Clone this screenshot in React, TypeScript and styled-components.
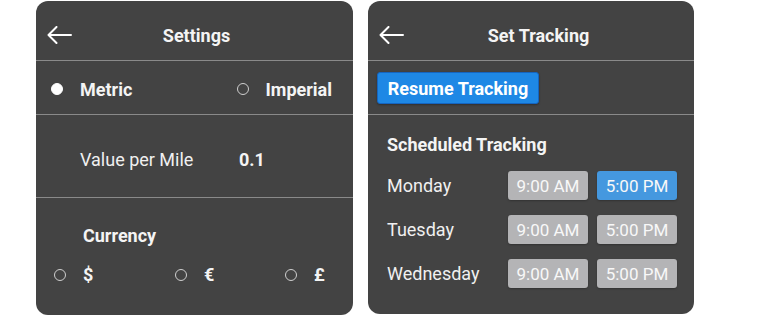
import React from 'react'
import styled, { createGlobalStyle } from 'styled-components'

const GlobalStyle = createGlobalStyle`
  body {
    margin: 0;
    background: #ffffff;
    font-family: Roboto, 'Liberation Sans', Arial, sans-serif;
  }
`

const days = [
  { day: 'Monday', start: '9:00 AM', end: '5:00 PM', endActive: true },
  { day: 'Tuesday', start: '9:00 AM', end: '5:00 PM', endActive: false },
  { day: 'Wednesday', start: '9:00 AM', end: '5:00 PM', endActive: false },
]

const currencies = ['$', '€', '£']

const BackArrow = () => (
  <svg width="26" height="18" viewBox="0 0 26 18" fill="none">
    <path d="M25 9H2.5M10.5 1L2.5 9L10.5 17" stroke="#ffffff" strokeWidth="2" strokeLinecap="round" strokeLinejoin="round" />
  </svg>
)

const App = () => {
  return (
    <>
      <GlobalStyle />
      <Page>
        <Panel width={317} height={314}>
          <Header>
            <BackArrow />
            <Title shift={4}>Settings</Title>
          </Header>
          <UnitRow>
            <Option>
              <Dot filled />
              <OptionLabel>Metric</OptionLabel>
            </Option>
            <Option>
              <Dot />
              <OptionLabel>Imperial</OptionLabel>
            </Option>
          </UnitRow>
          <ValueRow>
            <ValueLabel>Value per Mile</ValueLabel>
            <ValueNumber>0.1</ValueNumber>
          </ValueRow>
          <CurrencySection>
            <CurrencyTitle>Currency</CurrencyTitle>
            <CurrencyRow>
              {currencies.map((c) => (
                <Option key={c}>
                  <Dot />
                  <CurrencySymbol>{c}</CurrencySymbol>
                </Option>
              ))}
            </CurrencyRow>
          </CurrencySection>
        </Panel>

        <Panel width={326} height={313}>
          <Header>
            <BackArrow />
            <Title shift={15}>Set Tracking</Title>
          </Header>
          <ButtonRow>
            <ResumeButton>Resume Tracking</ResumeButton>
          </ButtonRow>
          <ScheduleSection>
            <ScheduleTitle>Scheduled Tracking</ScheduleTitle>
            {days.map((d) => (
              <DayRow key={d.day}>
                <DayLabel>{d.day}</DayLabel>
                <TimeButton>{d.start}</TimeButton>
                <TimeButton active={d.endActive}>{d.end}</TimeButton>
              </DayRow>
            ))}
          </ScheduleSection>
        </Panel>
      </Page>
    </>
  )
}

export default App

const Page = styled.div`
  display: flex;
  gap: 15px;
  padding: 1px 0 0 36px;
`

const Panel = styled.div<{ width: number; height: number }>`
  width: ${(p) => p.width}px;
  height: ${(p) => p.height}px;
  background: #434343;
  border-radius: 12px;
  color: #ffffff;
  display: flex;
  flex-direction: column;
  overflow: hidden;
`

const Header = styled.div`
  height: 60px;
  flex-shrink: 0;
  box-sizing: border-box;
  display: grid;
  grid-template-columns: 1fr auto 1fr;
  align-items: center;
  padding: 9px 10px 0;
  border-bottom: 1px solid #8a8a8a;
`

const Title = styled.div<{ shift: number }>`
  font-size: 18px;
  font-weight: 700;
  color: #f4f4f4;
  margin-left: ${(p) => p.shift}px;
`

const UnitRow = styled.div`
  height: 54px;
  flex-shrink: 0;
  display: flex;
  align-items: center;
  justify-content: space-between;
  padding: 3px 21px 0 15px;
  box-sizing: border-box;
  border-bottom: 1px solid #8a8a8a;
`

const Option = styled.div`
  display: flex;
  align-items: center;
  gap: 17px;
`

const Dot = styled.span<{ filled?: boolean }>`
  width: 12px;
  height: 12px;
  box-sizing: border-box;
  border-radius: 50%;
  background: ${(p) => (p.filled ? '#ffffff' : 'transparent')};
  border: 1px solid ${(p) => (p.filled ? '#ffffff' : '#cfcfcf')};
`

const OptionLabel = styled.span`
  font-size: 18px;
  font-weight: 700;
  color: #f4f4f4;
`

const ValueRow = styled.div`
  height: 83px;
  flex-shrink: 0;
  display: flex;
  align-items: center;
  padding: 7px 0 0 44px;
  box-sizing: border-box;
  border-bottom: 1px solid #8a8a8a;
`

const ValueLabel = styled.span`
  width: 159px;
  font-size: 18px;
  color: #f0f0f0;
`

const ValueNumber = styled.span`
  font-size: 18px;
  font-weight: 700;
  color: #f4f4f4;
`

const CurrencySection = styled.div`
  display: flex;
  flex-direction: column;
  padding: 28px 0 0 18px;
`

const CurrencyTitle = styled.div`
  font-size: 18px;
  font-weight: 700;
  line-height: 20px;
  color: #f4f4f4;
  margin-left: 29px;
`

const CurrencyRow = styled.div`
  display: grid;
  grid-template-columns: 121px 110px auto;
  margin-top: 18px;
  height: 20px;
  align-items: center;
`

const CurrencySymbol = styled.span`
  font-size: 18px;
  font-weight: 700;
  color: #f4f4f4;
`

const ButtonRow = styled.div`
  height: 54px;
  flex-shrink: 0;
  display: flex;
  align-items: center;
  padding: 1px 0 0 9px;
  box-sizing: border-box;
  border-bottom: 1px solid #8a8a8a;
`

const ResumeButton = styled.button`
  height: 32px;
  width: 162px;
  padding: 0;
  background: #1e88e5;
  border: 1px solid #1565c0;
  border-radius: 3px;
  color: #ffffff;
  font-family: Roboto, 'Liberation Sans', Arial, sans-serif;
  font-size: 18px;
  font-weight: 700;
  box-shadow: 0 1px 2px rgba(0, 0, 0, 0.3);
`

const ScheduleSection = styled.div`
  display: flex;
  flex-direction: column;
  gap: 15px;
  padding: 20px 17px 0 19px;
`

const ScheduleTitle = styled.div`
  font-size: 18px;
  font-weight: 700;
  line-height: 20px;
  color: #f4f4f4;
  margin-bottom: 1px;
`

const DayRow = styled.div`
  display: grid;
  grid-template-columns: 1fr 80px 80px;
  gap: 9px;
  align-items: center;
  height: 29px;
`

const DayLabel = styled.span`
  font-size: 18px;
  color: #f0f0f0;
`

const TimeButton = styled.div<{ active?: boolean }>`
  height: 29px;
  border-radius: 3px;
  background: ${(p) => (p.active ? '#4598df' : '#b4b4b6')};
  color: #f8f8f8;
  font-size: 17px;
  display: flex;
  align-items: center;
  justify-content: center;
  box-shadow: 0 1px 2px rgba(0, 0, 0, 0.25);
`
